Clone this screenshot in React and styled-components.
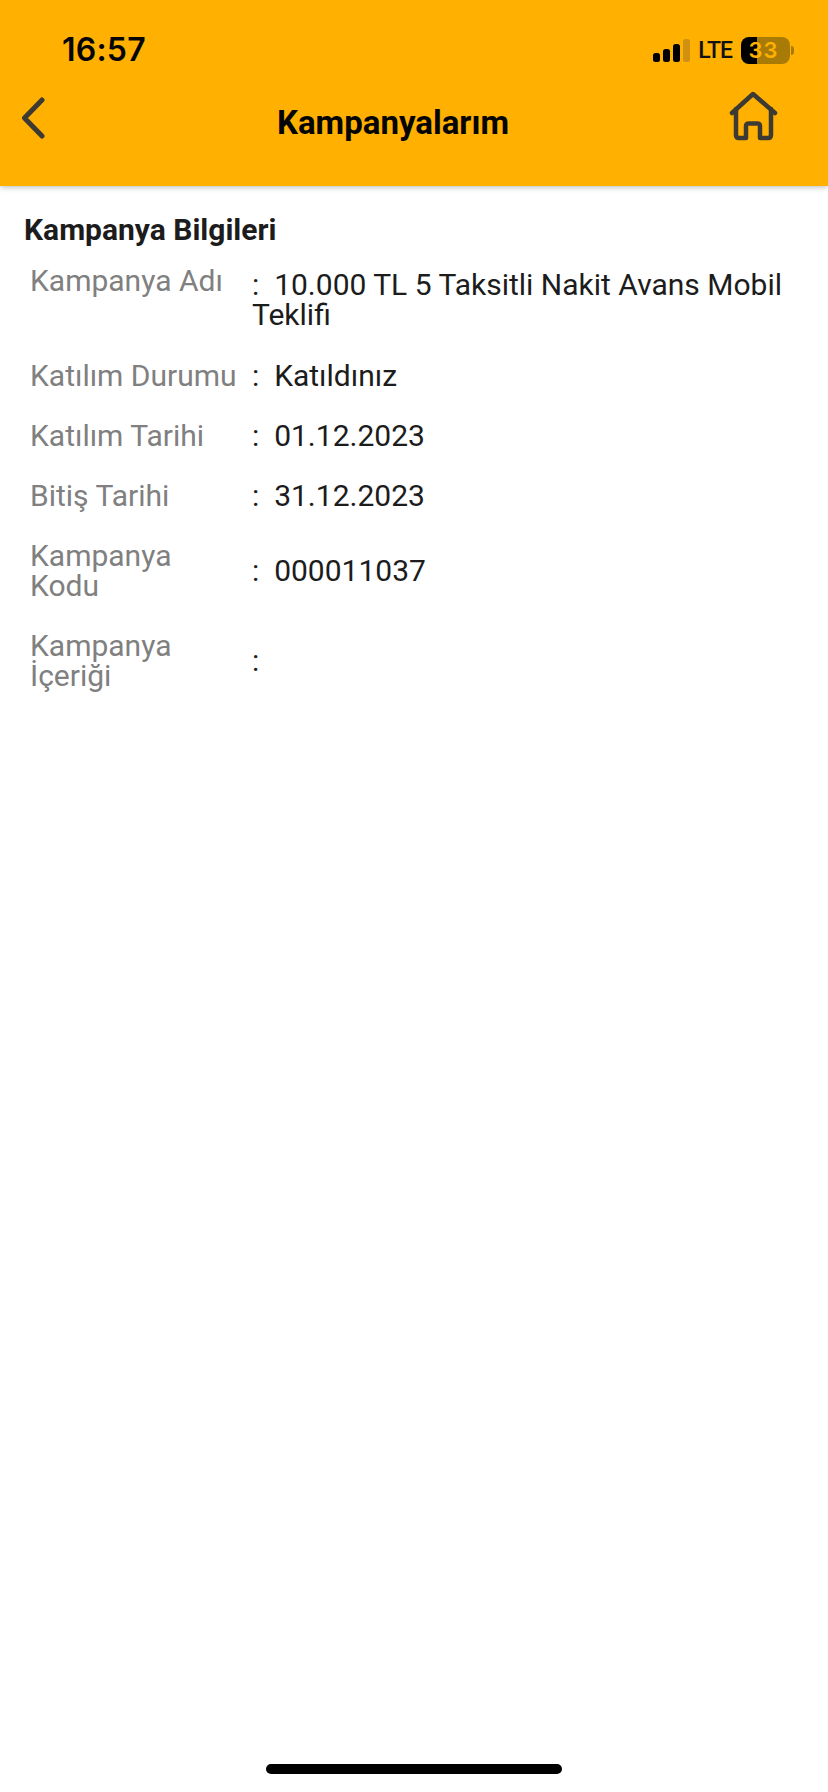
import React from "react";
import styled, { createGlobalStyle } from "styled-components";

const Global = createGlobalStyle`
  html, body { margin: 0; padding: 0; background: #fff; }
  body { font-family: Roboto, "Noto Sans", sans-serif; }
`;
const Page = styled.div`
  width: 828px; height: 1792px; position: relative; overflow: hidden; background: #fff;
`;
const Header = styled.header`
  height: 186px; background: #ffb000; box-shadow: 0 1px 6px rgba(0,0,0,.28);
  display: flex; flex-direction: column;
`;
const StatusBar = styled.div`
  height: 100px; display: flex; align-items: center; justify-content: space-between;
  padding: 0 34px 0 62px; box-sizing: border-box;
`;
const Time = styled.span`
  font: 600 32px/1 Inter, sans-serif; color: #050505; letter-spacing: .2px;
`;
const Indicators = styled.div`display: flex; align-items: center; gap: 8px;`;
const Lte = styled.span`
  font: 500 23px/1 Roboto, sans-serif; color: #111; letter-spacing: -1px; margin-right: 1px;
`;
const Battery = styled.div`
  width: 49px; height: 27px; border-radius: 8px; overflow: hidden;
  background: linear-gradient(90deg, #000 0 33%, #a87a06 33% 100%);
  font: 600 22px/27px Inter, sans-serif; letter-spacing: 1px; color: #ffb000;
  text-align: center; padding-right: 4px; box-sizing: border-box;
`;
const Nub = styled.span`
  width: 3px; height: 9px; margin-left: -7px; border-radius: 0 3px 3px 0; background: #a87a06;
`;
const NavBar = styled.div`
  flex: 1; display: flex; align-items: flex-start; justify-content: space-between;
  padding: 0 50px 0 20px;
`;
const BackIcon = styled.svg`margin-top: -3px;`;
const HomeIcon = styled.svg`margin-top: -10px;`;
const Title = styled.h1`
  margin: 5px 0 0; padding-left: 6px;
  font: 700 33px/36px Roboto, sans-serif; color: #050505;
`;
const Content = styled.main`padding: 26px 0 0 24px;`;
const SectionTitle = styled.h2`
  margin: 0 0 18px; font: 700 30px/36px Roboto, sans-serif; color: #1c1c1c;
`;
const Row = styled.div`
  display: flex; padding-left: 6px; min-height: 30px; margin-bottom: ${p => p.$gap}px;
  align-items: ${p => (p.$top ? "flex-start" : "center")};
`;
const Label = styled.div`
  width: 222px; flex: none; font: 400 30px/30px Roboto, sans-serif; color: #808080;
  padding-right: 60px; box-sizing: border-box;
  ${p => p.$nowrap && "white-space: nowrap;"}
`;
const Value = styled.div`
  width: 540px; font: 400 30px/30px Roboto, sans-serif; color: #1c1c1c; white-space: pre-wrap;
  ${p => p.$top && "padding-top: 4px;"}
`;
const HomeBar = styled.div`
  position: absolute; left: 266px; bottom: 18px; width: 296px; height: 10px;
  border-radius: 5px; background: #000;
`;

const rows = [
  { l: "Kampanya Adı", v: "10.000 TL 5 Taksitli Nakit Avans Mobil Teklifi", top: true, gap: 31, nowrap: true },
  { l: "Katılım Durumu", v: "Katıldınız", gap: 30, nowrap: true },
  { l: "Katılım Tarihi", v: "01.12.2023", gap: 30, nowrap: true },
  { l: "Bitiş Tarihi", v: "31.12.2023", gap: 30, nowrap: true },
  { l: "Kampanya Kodu", v: "000011037", gap: 30 },
  { l: "Kampanya İçeriği", v: "", gap: 0 },
];

export default function App() {
  return (
    <Page>
      <Global />
      <Header>
        <StatusBar>
          <Time>16:57</Time>
          <Indicators>
            <svg width="37" height="24" viewBox="0 0 37 24">
              <rect x="0" y="15" width="7" height="9" rx="2.5" fill="#000" />
              <rect x="10" y="11" width="7" height="13" rx="2.5" fill="#000" />
              <rect x="20" y="6" width="7" height="18" rx="2.5" fill="#000" />
              <rect x="30" y="1" width="7" height="23" rx="2.5" fill="#d09010" />
            </svg>
            <Lte>LTE</Lte>
            <Battery>33</Battery>
            <Nub />
          </Indicators>
        </StatusBar>
        <NavBar>
          <BackIcon width="32" height="44" viewBox="0 0 32 44" fill="none" stroke="#3d3a33" strokeWidth="5" strokeLinecap="round" strokeLinejoin="round">
            <path d="M22 3 L4.500 21 L22 39" />
          </BackIcon>
          <Title>Kampanyalarım</Title>
          <HomeIcon width="50" height="54" viewBox="0 0 50 54" fill="none" stroke="#3d3a33" strokeWidth="4.500" strokeLinecap="round" strokeLinejoin="round">
            <path d="M4 23 L25 4 L47 23" />
            <path d="M8 19 V45 Q8 48 11 48 H18 V36 Q18 33.500 21 33.500 H29 Q32 33.500 32 36 V48 H40 Q43 48 43 45 V19" />
          </HomeIcon>
        </NavBar>
      </Header>
      <Content>
        <SectionTitle>Kampanya Bilgileri</SectionTitle>
        {rows.map(r => (
          <Row key={r.l} $top={r.top} $gap={r.gap}>
            <Label $nowrap={r.nowrap}>{r.l}</Label>
            <Value $top={r.top}>{`:  ${r.v}`}</Value>
          </Row>
        ))}
      </Content>
      <HomeBar />
    </Page>
  );
}
